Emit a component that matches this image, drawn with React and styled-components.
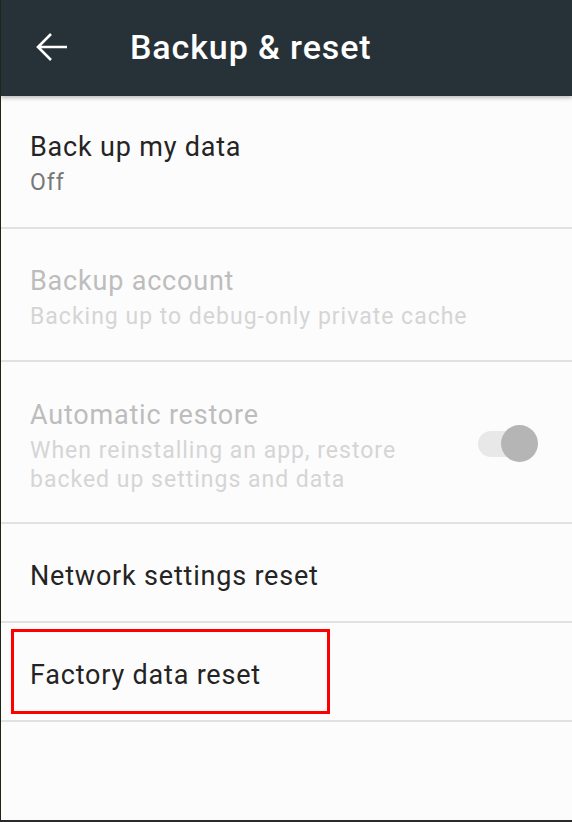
import styled, { createGlobalStyle } from "styled-components";

const GlobalStyle = createGlobalStyle`
  html, body {
    margin: 0;
    padding: 0;
    background: #fcfcfc;
  }
  body {
    font-family: Roboto, "Noto Sans", sans-serif;
  }
`;

let Screen = styled.div`
  width: 572px;
  height: 822px;
  box-sizing: border-box;
  border-left: 1px solid #1e2418;
  border-bottom: 2px solid #2a2a2a;
  background: #fcfcfc;
  display: flex;
  flex-direction: column;
  overflow: hidden;
`;

let Toolbar = styled.div`
  height: 96px;
  flex-shrink: 0;
  background: #263238;
  display: flex;
  align-items: center;
  padding-left: 35px;
  box-shadow: 0 2px 4px rgba(0, 0, 0, 0.25);
  position: relative;
  z-index: 1;
`;

let BackIcon = styled.svg`
  width: 32px;
  height: 32px;
  margin-top: -2px;
`;

let Title = styled.div`
  margin-left: 62px;
  color: #ffffff;
  font-size: 34px;
  letter-spacing: 0.9px;
  font-weight: 500;
  margin-top: -3px;
`;

let List = styled.div`
  display: flex;
  flex-direction: column;
`;

let Row = styled.div`
  height: ${(p) => p.$height}px;
  box-sizing: border-box;
  border-bottom: 2px solid #e2e2e2;
  display: flex;
  align-items: center;
  padding: 0 33px 0 29px;
  position: relative;
`;

let Texts = styled.div`
  flex: 1;
  display: flex;
  flex-direction: column;
  margin-top: ${(p) => p.$shift || 0}px;
`;

let ItemTitle = styled.div`
  font-size: 27px;
  letter-spacing: 0.8px;
  line-height: 34px;
  color: ${(p) => (p.$disabled ? "#bdbdbd" : "#242424")};
`;

let ItemSub = styled.div`
  font-size: 23px;
  letter-spacing: 1px;
  line-height: 29px;
  margin-top: 4px;
  color: ${(p) => (p.$disabled ? "#d5d5d5" : "#787878")};
`;

let Switch = styled.div`
  position: relative;
  width: 60px;
  height: 38px;
  flex-shrink: 0;
  margin-top: 4px;
  margin-right: 1px;
`;

let Track = styled.div`
  position: absolute;
  left: 0;
  top: 6px;
  width: 52px;
  height: 26px;
  border-radius: 13px;
  background: #e8e8e8;
`;

let Thumb = styled.div`
  position: absolute;
  right: 0;
  top: 0;
  width: 37px;
  height: 37px;
  border-radius: 50%;
  background: #b5b5b5;
`;

let Highlight = styled.div`
  position: absolute;
  left: 10px;
  top: 6px;
  width: 319px;
  height: 85px;
  box-sizing: border-box;
  border: 3px solid #ff0000;
  pointer-events: none;
`;

function App() {
  return (
    <>
      <GlobalStyle />
      <Screen>
        <Toolbar>
          <BackIcon viewBox="0 0 32 32">
            <path
              d="M2 16H31M15 3L2 16L15 29"
              fill="none"
              stroke="#ffffff"
              strokeWidth="2.6"
              strokeLinejoin="miter"
            />
          </BackIcon>
          <Title>Backup &amp; reset</Title>
        </Toolbar>
        <List>
          <Row $height={133}>
            <Texts $shift={3}>
              <ItemTitle>Back up my data</ItemTitle>
              <ItemSub>Off</ItemSub>
            </Texts>
          </Row>
          <Row $height={133}>
            <Texts $shift={6}>
              <ItemTitle $disabled>Backup account</ItemTitle>
              <ItemSub $disabled>Backing up to debug-only private cache</ItemSub>
            </Texts>
          </Row>
          <Row $height={162}>
            <Texts $shift={7}>
              <ItemTitle $disabled>Automatic restore</ItemTitle>
              <ItemSub $disabled>
                When reinstalling an app, restore
                <br />
                backed up settings and data
              </ItemSub>
            </Texts>
            <Switch>
              <Track />
              <Thumb />
            </Switch>
          </Row>
          <Row $height={99}>
            <Texts $shift={7}>
              <ItemTitle>Network settings reset</ItemTitle>
            </Texts>
          </Row>
          <Row $height={99}>
            <Texts $shift={7}>
              <ItemTitle>Factory data reset</ItemTitle>
            </Texts>
            <Highlight />
          </Row>
        </List>
      </Screen>
    </>
  );
}

export default App;
